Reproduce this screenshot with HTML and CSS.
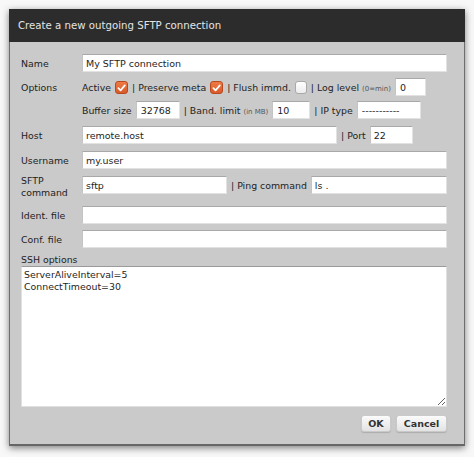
FILE: index.html
```html
<!DOCTYPE html>
<html>
<head>
<meta charset="utf-8">
<link rel="stylesheet" href="styles.css">
</head>
<body>
<div class="dialog">
  <div class="titlebar">Create a new outgoing SFTP connection</div>
  <div class="content">
    <div class="row r1">
      <span class="lbl">Name</span>
      <input class="field grow" value="My SFTP connection">
    </div>
    <div class="row r2">
      <span class="lbl">Options</span>
      <span class="txt">Active</span>
      <span class="cb on"><svg viewBox="0 0 12 12" width="12" height="12"><path d="M2.6 6.2 L5 8.6 L9.6 3.2" fill="none" stroke="#fff" stroke-width="1.9" stroke-linecap="round" stroke-linejoin="round"/></svg></span>
      <span class="txt">| Preserve meta</span>
      <span class="cb on"><svg viewBox="0 0 12 12" width="12" height="12"><path d="M2.6 6.2 L5 8.6 L9.6 3.2" fill="none" stroke="#fff" stroke-width="1.9" stroke-linecap="round" stroke-linejoin="round"/></svg></span>
      <span class="txt">| Flush immd.</span>
      <span class="cb off"></span>
      <span class="txt">| Log level <small>(0=min)</small></span>
      <input class="field w-log" value="0">
    </div>
    <div class="row r3">
      <span class="lbl"></span>
      <span class="txt">Buffer size</span>
      <input class="field w-buf" value="32768">
      <span class="txt">| Band. limit <small>(in MB)</small></span>
      <input class="field w-band" value="10">
      <span class="txt">| IP type</span>
      <input class="field w-ip" value="-----------">
    </div>
    <div class="row r4">
      <span class="lbl">Host</span>
      <input class="field w-host" value="remote.host">
      <span class="txt">| Port</span>
      <input class="field w-port" value="22">
    </div>
    <div class="row r5">
      <span class="lbl">Username</span>
      <input class="field grow" value="my.user">
    </div>
    <div class="row r6">
      <span class="lbl two">SFTP<br>command</span>
      <input class="field w-sftp" value="sftp">
      <span class="txt">| Ping command</span>
      <input class="field grow" value="ls .">
    </div>
    <div class="row r7">
      <span class="lbl">Ident. file</span>
      <input class="field grow" value="">
    </div>
    <div class="row r8">
      <span class="lbl">Conf. file</span>
      <input class="field grow" value="">
    </div>
    <div class="sshlbl">SSH options</div>
    <textarea class="area">ServerAliveInterval=5
ConnectTimeout=30</textarea>
  </div>
  <div class="footer">
    <button class="btn ok">OK</button>
    <button class="btn cancel">Cancel</button>
  </div>
</div>
</body>
</html>
```

FILE: styles.css
```css
* { box-sizing: border-box; }
html, body { margin: 0; padding: 0; }
body {
  background: #f8f8f8;
  font-family: "DejaVu Sans", Verdana, sans-serif;
  font-size: 9.4px;
  color: #1e1e1e;
  width: 474px;
  height: 457px;
  overflow: hidden;
}
.dialog {
  margin: 9px 0 0 9px;
  width: 456px;
  height: 437px;
  background: #cacaca;
  border: 1px solid #6e6e6e;
  border-top: none;
  border-bottom: 2px solid #666;
  box-shadow: 0 2px 7px rgba(0,0,0,0.5);
  display: flex;
  flex-direction: column;
}
.titlebar {
  height: 33px;
  margin: 0 -1px;
  background: #2c2c2c;
  color: #e4e4e4;
  font-size: 10.2px;
  padding-left: 9px;
  display: flex;
  align-items: center;
}
.content {
  padding: 12px 17px 0 11px;
  display: flex;
  flex-direction: column;
}
.row {
  display: flex;
  align-items: center;
  height: 18px;
  white-space: nowrap;
}
.r1 { margin-bottom: 6px; }
.r2 { margin-bottom: 5px; }
.r3 { margin-bottom: 7px; }
.r4 { margin-bottom: 7px; }
.r5 { margin-bottom: 7px; }
.r6 { margin-bottom: 12px; }
.r7 { margin-bottom: 6px; }
.r8 { margin-bottom: 6px; }
.lbl {
  width: 61px;
  flex: none;
}
.lbl.two { line-height: 12px; margin-top: 4px; }
.txt { margin-right: 4px; }
.txt small { font-size: 7px; color: #555; }
.field {
  height: 18px;
  border: 1px solid #e2e2e2;
  border-top-color: #a8a8a8;
  border-left-color: #c4c4c4;
  background: #fff;
  font-family: "DejaVu Sans", Verdana, sans-serif;
  font-size: 9.5px;
  color: #1e1e1e;
  padding: 0 3px;
  margin: 0 4px 0 0;
  outline: none;
}
.grow { flex: 1; margin-right: 0; }
.w-log { width: 31px; margin-right: 0; padding-left: 4px; }
.w-buf { width: 44px; padding-left: 4px; }
.w-band { width: 38px; padding-left: 4px; }
.w-ip { width: 64px; padding-left: 4px; }
.w-host { width: 255px; }
.w-port { width: 43px; }
.w-sftp { width: 145px; }
.cb {
  width: 13px;
  height: 13px;
  border-radius: 3px;
  flex: none;
  margin: 1px 4px 0 0;
  display: flex;
  align-items: center;
  justify-content: center;
}
.cb.on {
  background: linear-gradient(#ee7a44, #d85a2a);
  border: 1px solid #b9491f;
}
.cb.off {
  width: 12px;
  background: linear-gradient(#ffffff, #ececec);
  border: 1px solid #a9a9a9;
}
.sshlbl {
  height: 12px;
  line-height: 12px;
}
.area {
  width: 426px;
  height: 141px;
  border: 1px solid #e0e0e0;
  border-top-color: #9a9a9a;
  background: #fff;
  font-family: "DejaVu Sans", Verdana, sans-serif;
  font-size: 9.4px;
  line-height: 12px;
  color: #1e1e1e;
  padding: 2px 2px;
  margin: 0;
  resize: both;
  outline: none;
  overflow: hidden;
}
.footer {
  display: flex;
  justify-content: flex-end;
  gap: 5px;
  padding: 8px 17px 0 0;
}
.btn {
  height: 17px;
  padding: 0;
  border: 1px solid #c9c9c9;
  border-radius: 3px;
  background: linear-gradient(#fbfbfb, #e3e3e3);
  font-family: "DejaVu Sans", Verdana, sans-serif;
  font-size: 9.5px;
  font-weight: bold;
  color: #333;
  box-shadow: 0 1px 1px rgba(0,0,0,0.15);
}
.ok { width: 30px; }
.cancel { width: 51px; }
```
